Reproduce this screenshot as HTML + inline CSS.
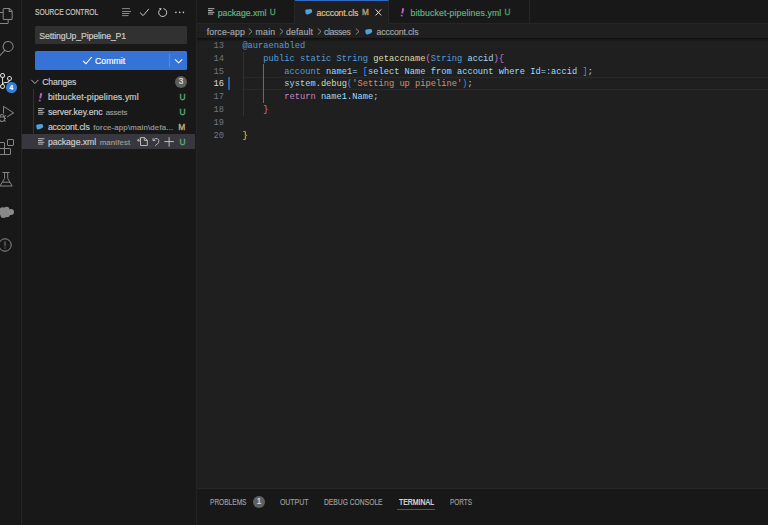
<!DOCTYPE html>
<html>
<head>
<meta charset="utf-8">
<title>Source Control</title>
<style>
html,body{margin:0;padding:0;background:#1f1f1f;}
body{width:768px;height:525px;overflow:hidden;position:relative;font-family:"Liberation Sans",sans-serif;color:#cccccc;font-size:8.7px;}
.abs{position:absolute;white-space:nowrap;}
#act{position:absolute;left:0;top:0;width:21px;height:525px;background:#181818;border-right:1px solid #262626;}
#side{position:absolute;left:22px;top:0;width:173px;height:525px;background:#181818;border-right:1px solid #1a1a1a;}
#tabs{position:absolute;left:196px;top:0;width:572px;height:23px;background:#181818;border-bottom:1px solid #262626;}
.tab{position:absolute;top:0;height:23px;border-right:1px solid #272727;box-sizing:border-box;}
#bc{position:absolute;left:196px;top:24px;width:572px;height:14px;background:#1f1f1f;}
#ed{position:absolute;left:196px;top:38px;width:572px;height:450px;background:#1f1f1f;box-shadow:inset 0 4px 3px -3px rgba(0,0,0,.75);}
#panel{position:absolute;left:196px;top:488px;width:572px;height:37px;background:#181818;border-top:1px solid #272727;box-sizing:border-box;}
.t{position:absolute;white-space:nowrap;line-height:12px;height:12px;-webkit-text-stroke:0.18px currentColor;}
.ln{position:absolute;white-space:pre;font-family:"Liberation Mono",monospace;font-size:8.72px;line-height:12.8px;height:12.8px;}
.num{color:#6e7681;width:28px;text-align:right;left:196px;}
.g{color:#73c991}.m{color:#e2c08d}.d{color:#9d9d9d}
.kw{color:#569cd6}.fn{color:#dcdcaa}.v{color:#9cdcfe}.s{color:#ce9178}.c{color:#c586c0}.b1{color:#ffd700}.b2{color:#da70d6}.b3{color:#179fff}.w{color:#d4d4d4}
.row{position:absolute;left:22px;width:173px;height:15px;}
svg{position:absolute;overflow:visible;}
</style>
</head>
<body>
<div id="act"></div>
<div id="side"></div>
<div id="tabs">
  <div class="tab" style="left:0;width:99px;"></div>
  <div class="tab" style="left:99px;width:94px;background:#1f1f1f;border-top:1px solid #2e6bc2;height:24px;"></div>
  <div class="tab" style="left:193px;width:141px;"></div>
</div>
<div id="bc"></div>
<div id="ed"></div>
<div id="panel"></div>


<!-- activity bar icons -->
<svg style="left:-2px;top:8.3px;" width="16" height="16" viewBox="0 0 24 24"><path fill="#868686" d="M17.5 0h-9L7 1.5V6H2.5L1 7.5v15.07L2.5 24h12.07L16 22.57V18h4.7l1.3-1.43V4.5L17.5 0zm0 2.12l2.38 2.38H17.5V2.12zm-3 20.38h-12v-15H7v9.07L8.5 18h6v4.5zm6-6h-12v-15H16V6h4.5v10.5z"/></svg>
<svg style="left:-2px;top:41px;" width="16" height="16" viewBox="0 0 24 24"><path fill="#868686" d="M15.25 0a8.25 8.25 0 0 0-6.18 13.72L1 22.88l1.12 1.12 8.05-9.12A8.251 8.251 0 1 0 15.25.01V0zm0 15a6.75 6.75 0 1 1 0-13.5 6.75 6.75 0 0 1 0 13.5z"/></svg>
<svg style="left:-2.2px;top:73.3px;" width="16" height="16" viewBox="0 0 24 24"><path fill="#d7d7d7" d="M21.007 8.222A3.738 3.738 0 0 0 15.045 5.2a3.737 3.737 0 0 0 1.156 6.583 2.988 2.988 0 0 1-2.668 1.67h-2.99a4.456 4.456 0 0 0-2.989 1.165V7.4a3.737 3.737 0 1 0-1.494 0v9.117a3.776 3.776 0 1 0 1.816.099 2.99 2.99 0 0 1 2.668-1.667h2.99a4.484 4.484 0 0 0 4.223-3.039 3.736 3.736 0 0 0 3.25-3.687zM4.565 3.738a2.242 2.242 0 1 1 4.484 0 2.242 2.242 0 0 1-4.484 0zm4.484 16.441a2.242 2.242 0 1 1-4.484 0 2.242 2.242 0 0 1 4.484 0zm8.221-9.715a2.242 2.242 0 1 1 0-4.485 2.242 2.242 0 0 1 0 4.485z"/></svg>
<div class="abs" style="left:6px;top:82px;width:10.6px;height:10.6px;border-radius:5.3px;background:#2f7fe0;"></div>
<div class="t" style="left:6px;top:81.5px;width:10.6px;text-align:center;font-size:6.5px;color:#ffffff;font-weight:bold;">4</div>
<svg style="left:-2px;top:105.9px;" width="16" height="16" viewBox="0 0 24 24"><path fill="#868686" d="M10.94 13.5l-1.32 1.32a3.73 3.73 0 0 0-7.24 0L1.06 13.5 0 14.56l1.72 1.72-.22.22V18H0v1.5h1.5v.08c.077.489.214.966.41 1.42L0 22.94 1.06 24l1.65-1.65A4.308 4.308 0 0 0 6 24a4.31 4.31 0 0 0 3.29-1.65L10.94 24 12 22.94 10.09 21c.198-.464.336-.951.41-1.45v-.1H12V18h-1.5v-1.5l-.22-.22L12 14.56l-1.06-1.06zM6 13.5a2.25 2.25 0 0 1 2.25 2.25h-4.5A2.25 2.25 0 0 1 6 13.5zm3 6a3.33 3.33 0 0 1-3 3 3.33 3.33 0 0 1-3-3v-2.25h6v2.25zm14.76-9.9v1.26L13.5 17.37V15.6l8.5-5.37L9 2v9.46a5.07 5.07 0 0 0-1.5-.72V.63L8.64 0l15.12 9.6z"/></svg>
<svg style="left:-2px;top:139px;" width="16" height="16" viewBox="0 0 24 24"><path fill="#868686" d="M13.5 1.5L15 0h7.5L24 1.5V9l-1.5 1.5H15L13.5 9V1.5zm1.5 0V9h7.5V1.5H15zM0 15V6l1.5-1.5H9L10.5 6v7.5H18l1.5 1.5v7.5L18 24H1.5L0 22.5V15zm9-1.5V6H1.5v7.5H9zM9 15H1.5v7.5H9V15zm1.5 7.5H18V15h-7.5v7.5z"/></svg>
<svg style="left:0px;top:166px;" width="24" height="24" viewBox="0 0 24 24"><path fill="none" stroke="#8a8a8a" stroke-width="0.95" stroke-linejoin="round" d="M2.4 6.5H9.6M4.6 6.5V12.4L0 20H12.2L7.7 12.4V6.5M2.6 16.2H9.8"/></svg>
<svg style="left:0px;top:206px;" width="15" height="14" viewBox="0 0 15 14"><g fill="#8a8a8a"><circle cx="2.6" cy="4.2" r="3"/><circle cx="6.6" cy="3.6" r="2.9"/><circle cx="11" cy="6" r="3"/><circle cx="3.4" cy="9" r="3"/><circle cx="6.8" cy="8" r="3.2"/><circle cx="1.2" cy="6.5" r="2.4"/><circle cx="9" cy="6.6" r="2.6"/></g></svg>
<svg style="left:-2px;top:238.4px;" width="14" height="14" viewBox="0 0 14 14"><circle cx="7" cy="7" r="6.2" fill="none" stroke="#8c8c8c" stroke-width="1"/><path stroke="#909090" stroke-width="0.85" d="M7 3.4v4.9M7 9.4v1.2"/></svg>

<!-- sidebar header icons -->
<svg style="left:122px;top:8px;" width="10" height="9" viewBox="0 0 10 9"><path stroke="#b8b8b8" stroke-width="0.7" fill="none" d="M0 0.6h8M0 3.5h9M0 5.5h7.5M0 7.6h6.5"/></svg>
<svg style="left:139px;top:7px;" width="11" height="10" viewBox="0 0 11 10"><path stroke="#cccccc" stroke-width="1" fill="none" d="M1 5.6L4.1 8.6L9.9 1.9"/></svg>
<svg style="left:157px;top:7px;" width="11" height="11" viewBox="0 0 11 11"><path stroke="#cccccc" stroke-width="1" fill="none" d="M3.3 2.3A4 4 0 1 0 6.5 1.6"/><path fill="#cccccc" d="M1.9 0.9L4.6 1.2L3.7 3.6z"/></svg>
<svg style="left:174px;top:11px;" width="11" height="3" viewBox="0 0 11 3"><circle cx="1.9" cy="1.4" r="0.8" fill="#cccccc"/><circle cx="5.7" cy="1.4" r="0.8" fill="#cccccc"/><circle cx="9.4" cy="1.4" r="0.8" fill="#cccccc"/></svg>
<!-- sidebar header -->
<!-- input -->
<div class="abs" style="left:35px;top:26px;width:152px;height:18px;background:#313131;border-radius:1.5px;"></div>
<!-- commit button -->
<div class="abs" style="left:35px;top:51px;width:152px;height:19px;background:#3574d6;border-radius:1.5px;"></div>
<div class="abs" style="left:169px;top:54px;width:1px;height:13px;background:#5489df;"></div>
<!-- changes -->
<div class="abs" style="left:174.9px;top:75.6px;width:12.2px;height:12.2px;border-radius:6.1px;background:#5e5e5e;"></div>
<div class="t" style="left:175px;top:75.7px;width:12px;text-align:center;font-size:8.2px;color:#e0e0e0;">3</div>
<div class="abs" style="left:33px;top:89px;width:1px;height:60px;background:#343434;"></div>
<!-- rows -->
<div class="row" style="top:134px;background:#37373d;"></div>

<!-- tabs text -->

<!-- breadcrumb -->

<!-- code -->
<div class="abs" style="left:242px;top:77px;width:526px;height:13px;border-top:1px solid #292929;border-bottom:1px solid #292929;box-sizing:border-box;"></div>
<div class="ln num" style="top:39.8px;">13</div>
<div class="ln num" style="top:52.6px;">14</div>
<div class="ln num" style="top:65.9px;">15</div>
<div class="ln num" style="top:78.2px;color:#dcdcdc;">16</div>
<div class="ln num" style="top:91.0px;">17</div>
<div class="ln num" style="top:103.8px;">18</div>
<div class="ln num" style="top:116.6px;">19</div>
<div class="ln num" style="top:129.9px;">20</div>
<div class="ln" style="left:242.4px;top:39.8px;"><span class="kw">@auraenabled</span></div>
<div class="ln" style="left:242.4px;top:52.6px;">    <span class="kw">public static String</span> <span class="fn">getaccname</span><span class="b2">(</span><span class="kw">String</span> <span class="v">accid</span><span class="b2">){</span></div>
<div class="ln" style="left:242.4px;top:65.9px;">        <span class="kw">account</span> <span class="v">name1=</span> <span class="b3">[</span><span class="v">select Name from account where Id=:accid</span> <span class="b3">]</span><span class="w">;</span></div>
<div class="ln" style="left:242.4px;top:78.2px;">        <span class="v">system</span><span class="w">.</span><span class="fn">debug</span><span class="b3">(</span><span class="s">'Setting up pipeline'</span><span class="b3">)</span><span class="w">;</span></div>
<div class="ln" style="left:242.4px;top:91.0px;">        <span class="c">return</span> <span class="v">name1.Name;</span></div>
<div class="ln" style="left:242.4px;top:103.8px;">    <span class="b2">}</span></div>
<div class="ln" style="left:242.4px;top:129.9px;"><span class="b1">}</span></div>

<div class="abs" style="left:196px;top:0;width:1px;height:525px;background:#222222;"></div>
<!-- small icons -->
<svg style="left:82px;top:56px;" width="11" height="9" viewBox="0 0 11 9"><path stroke="#ffffff" stroke-width="1.1" fill="none" d="M1.2 5L4 7.8L9.7 1"/></svg>
<svg style="left:174px;top:58px;" width="9" height="6" viewBox="0 0 9 6"><path stroke="#ffffff" stroke-width="1.1" fill="none" d="M1 1.3L4.6 4.8L8.2 1.3"/></svg>
<svg style="left:31px;top:78.8px;" width="8" height="6" viewBox="0 0 8 6"><path stroke="#c5c5c5" stroke-width="0.9" fill="none" d="M0.4 0.9L3.9 4.5L7.4 0.9"/></svg>
<svg style="left:37.5px;top:92.5px;" width="5" height="9" viewBox="0 0 5 9"><defs><linearGradient id="g37" x1="0" y1="0" x2="0" y2="1"><stop offset="0" stop-color="#d65fc4"/><stop offset="1" stop-color="#8a5be0"/></linearGradient></defs><path stroke="url(#g37)" stroke-width="1.9" fill="none" d="M3.3 0.2L2.2 5.4M1.9 6.8L1.6 8.4"/></svg>
<svg style="left:38px;top:108px;" width="7" height="8" viewBox="0 0 7 8"><path stroke="#bdbdbd" stroke-width="0.95" fill="none" d="M0 0.7h6.4M0 2.5h4.6M0 4.3h6.4M0 6.1h5.2"/></svg>
<svg style="left:36px;top:123.5px;" width="8" height="6" viewBox="0 0 8 6"><path fill="#4aa3dc" d="M1.2 0.4L5.6 0.1Q7.4 0.6 7.2 2.4Q7 4 5.2 4.4L2.6 5.4Q1 5.6 0.6 4.2L0.2 1.8Q0.2 0.6 1.2 0.4z"/></svg>
<svg style="left:38px;top:138px;" width="7" height="8" viewBox="0 0 7 8"><path stroke="#bdbdbd" stroke-width="0.95" fill="none" d="M0 0.7h6.4M0 2.5h4.6M0 4.3h6.4M0 6.1h5.2"/></svg>
<svg style="left:137px;top:137px;" width="11" height="9" viewBox="0 0 11 9"><path stroke="#c5c5c5" stroke-width="0.9" fill="none" d="M3.5 8.5V0.6H7.5L10.3 3.2V8.5H3.5M7.3 0.6V3.4H10.3M3.4 3.2H0.6L2.2 1.6M0.6 3.2L2.2 4.8"/></svg>
<svg style="left:152px;top:137px;" width="8" height="9" viewBox="0 0 8 9"><path stroke="#c5c5c5" stroke-width="0.9" fill="none" d="M1 1.2V3.6H3.4M1.2 3.4Q3 0.8 5.4 1.6Q7.6 2.8 6.6 5.4Q5.6 7.4 3.2 8.6"/></svg>
<svg style="left:164px;top:136.5px;" width="10" height="10" viewBox="0 0 10 10"><path stroke="#d4d4d4" stroke-width="0.85" fill="none" d="M5.1 0.3V9.7M0.3 4.6H9.9"/></svg>
<svg style="left:208px;top:8px;" width="7" height="8" viewBox="0 0 7 8"><path stroke="#bdbdbd" stroke-width="0.95" fill="none" d="M0 0.7h6.4M0 2.5h4.6M0 4.3h6.4M0 6.1h5.2"/></svg>
<svg style="left:305px;top:8.7px;" width="8" height="6" viewBox="0 0 8 6"><path fill="#4aa3dc" d="M1.2 0.4L5.6 0.1Q7.4 0.6 7.2 2.4Q7 4 5.2 4.4L2.6 5.4Q1 5.6 0.6 4.2L0.2 1.8Q0.2 0.6 1.2 0.4z"/></svg>
<svg style="left:400px;top:7.6px;" width="5" height="9" viewBox="0 0 5 9"><defs><linearGradient id="g400" x1="0" y1="0" x2="0" y2="1"><stop offset="0" stop-color="#d65fc4"/><stop offset="1" stop-color="#8a5be0"/></linearGradient></defs><path stroke="url(#g400)" stroke-width="1.9" fill="none" d="M3.3 0.2L2.2 5.4M1.9 6.8L1.6 8.4"/></svg>
<svg style="left:375px;top:9px;" width="7" height="7" viewBox="0 0 7 7"><path stroke="#e0e0e0" stroke-width="1" fill="none" d="M0.6 0.4L6.2 6.4M6.2 0.4L0.6 6.4"/></svg>
<svg style="left:248.3px;top:28.2px;" width="5" height="7" viewBox="0 0 5 7"><path stroke="#9a9a9a" stroke-width="0.9" fill="none" d="M0.8 0.5L4 3.5L0.8 6.5"/></svg>
<svg style="left:279px;top:28.2px;" width="5" height="7" viewBox="0 0 5 7"><path stroke="#9a9a9a" stroke-width="0.9" fill="none" d="M0.8 0.5L4 3.5L0.8 6.5"/></svg>
<svg style="left:317px;top:28.2px;" width="5" height="7" viewBox="0 0 5 7"><path stroke="#9a9a9a" stroke-width="0.9" fill="none" d="M0.8 0.5L4 3.5L0.8 6.5"/></svg>
<svg style="left:354.5px;top:28.2px;" width="5" height="7" viewBox="0 0 5 7"><path stroke="#9a9a9a" stroke-width="0.9" fill="none" d="M0.8 0.5L4 3.5L0.8 6.5"/></svg>
<svg style="left:364.6px;top:28.6px;" width="8" height="6" viewBox="0 0 8 6"><path fill="#4aa3dc" d="M1.2 0.4L5.6 0.1Q7.4 0.6 7.2 2.4Q7 4 5.2 4.4L2.6 5.4Q1 5.6 0.6 4.2L0.2 1.8Q0.2 0.6 1.2 0.4z"/></svg>
<div class="abs" style="left:228.2px;top:77px;width:1.6px;height:13px;background:#2762aa;"></div>
<div class="abs" style="left:243px;top:51.6px;width:1px;height:64px;background:#303030;"></div>
<div class="abs" style="left:263px;top:64.4px;width:1px;height:38.4px;background:#6a6a6a;"></div>
<div class="t" style="left:35.20px;top:7.06px;font-size:8.2px;color:#c8c8c8;transform:scaleX(0.8171);transform-origin:0 0;">SOURCE CONTROL</div>
<div class="t" style="left:39.30px;top:29.79px;font-size:8.7px;color:#cccccc;letter-spacing:-0.127px;">SettingUp_Pipeline_P1</div>
<div class="t" style="left:94.90px;top:54.79px;font-size:8.7px;color:#ffffff;letter-spacing:0.094px;">Commit</div>
<div class="t" style="left:42.20px;top:76.39px;font-size:8.7px;color:#cccccc;letter-spacing:-0.112px;">Changes</div>
<div class="t" style="left:47.90px;top:91.19px;font-size:8.7px;color:#cccccc;letter-spacing:0.131px;">bitbucket-pipelines.yml</div>
<div class="t" style="left:179.47px;top:91.29px;font-size:8.4px;color:#5cad7b;-webkit-text-stroke:0.35px #5cad7b;">U</div>
<div class="t" style="left:47.90px;top:105.99px;font-size:8.7px;color:#cccccc;letter-spacing:-0.055px;">server.key.enc</div>
<div class="t" style="left:105.70px;top:107.00px;font-size:7.8px;color:#9a9a9a;letter-spacing:-0.174px;">assets</div>
<div class="t" style="left:179.47px;top:106.09px;font-size:8.4px;color:#5cad7b;-webkit-text-stroke:0.35px #5cad7b;">U</div>
<div class="t" style="left:47.90px;top:120.79px;font-size:8.7px;color:#cccccc;letter-spacing:-0.108px;">acccont.cls</div>
<div class="t" style="left:93.20px;top:121.80px;font-size:7.8px;color:#9a9a9a;letter-spacing:0.197px;">force-app\main\defa...</div>
<div class="t" style="left:178.16px;top:120.89px;font-size:8.4px;color:#c4aa7e;-webkit-text-stroke:0.35px #c4aa7e;">M</div>
<div class="t" style="left:47.90px;top:135.79px;font-size:8.7px;color:#cccccc;letter-spacing:-0.044px;">package.xml</div>
<div class="t" style="left:99.70px;top:136.80px;font-size:7.8px;color:#9a9a9a;letter-spacing:0.141px;">manifest</div>
<div class="t" style="left:179.47px;top:135.89px;font-size:8.4px;color:#5cad7b;-webkit-text-stroke:0.35px #5cad7b;">U</div>
<div class="t" style="left:217.80px;top:6.59px;font-size:8.7px;color:#62b580;letter-spacing:-0.007px;">package.xml</div>
<div class="t" style="left:269.64px;top:6.76px;font-size:8.2px;color:#4f9a6b;-webkit-text-stroke:0.35px #4f9a6b;">U</div>
<div class="t" style="left:316.50px;top:6.59px;font-size:8.7px;color:#e2c08d;letter-spacing:-0.117px;">acccont.cls</div>
<div class="t" style="left:361.99px;top:6.76px;font-size:8.2px;color:#b49c74;-webkit-text-stroke:0.35px #b49c74;">M</div>
<div class="t" style="left:410.50px;top:6.59px;font-size:8.7px;color:#62b580;letter-spacing:0.131px;">bitbucket-pipelines.yml</div>
<div class="t" style="left:504.59px;top:6.76px;font-size:8.2px;color:#4f9a6b;-webkit-text-stroke:0.35px #4f9a6b;">U</div>
<div class="t" style="left:206.70px;top:25.79px;font-size:8.7px;color:#a3a3a3;letter-spacing:0.177px;">force-app</div>
<div class="t" style="left:255.60px;top:25.79px;font-size:8.7px;color:#a3a3a3;letter-spacing:0.239px;">main</div>
<div class="t" style="left:286.10px;top:25.79px;font-size:8.7px;color:#a3a3a3;letter-spacing:0.129px;">default</div>
<div class="t" style="left:324.10px;top:25.79px;font-size:8.7px;color:#a3a3a3;letter-spacing:-0.381px;">classes</div>
<div class="t" style="left:376.40px;top:25.79px;font-size:8.7px;color:#a3a3a3;letter-spacing:-0.089px;">acccont.cls</div>
<div class="t" style="left:209.70px;top:497.16px;font-size:8.2px;color:#9d9d9d;transform:scaleX(0.8022);transform-origin:0 0;">PROBLEMS</div>
<div class="t" style="left:279.80px;top:497.16px;font-size:8.2px;color:#9d9d9d;transform:scaleX(0.8434);transform-origin:0 0;">OUTPUT</div>
<div class="t" style="left:324.30px;top:497.16px;font-size:8.2px;color:#9d9d9d;transform:scaleX(0.8203);transform-origin:0 0;">DEBUG CONSOLE</div>
<div class="t" style="left:399.10px;top:497.16px;font-size:8.2px;color:#e7e7e7;transform:scaleX(0.8453);transform-origin:0 0;">TERMINAL</div>
<div class="t" style="left:450.00px;top:497.16px;font-size:8.2px;color:#9d9d9d;transform:scaleX(0.7804);transform-origin:0 0;">PORTS</div>
<!-- panel -->
<div class="abs" style="left:253px;top:496px;width:12px;height:12px;border-radius:6px;background:#616161;"></div>
<div class="t" style="left:253px;top:496.3px;width:12px;text-align:center;font-size:8.2px;color:#e0e0e0;">1</div>
<div class="abs" style="left:397px;top:509px;width:38px;height:1px;background:#2c5c9c;"></div>
</body>
</html>
